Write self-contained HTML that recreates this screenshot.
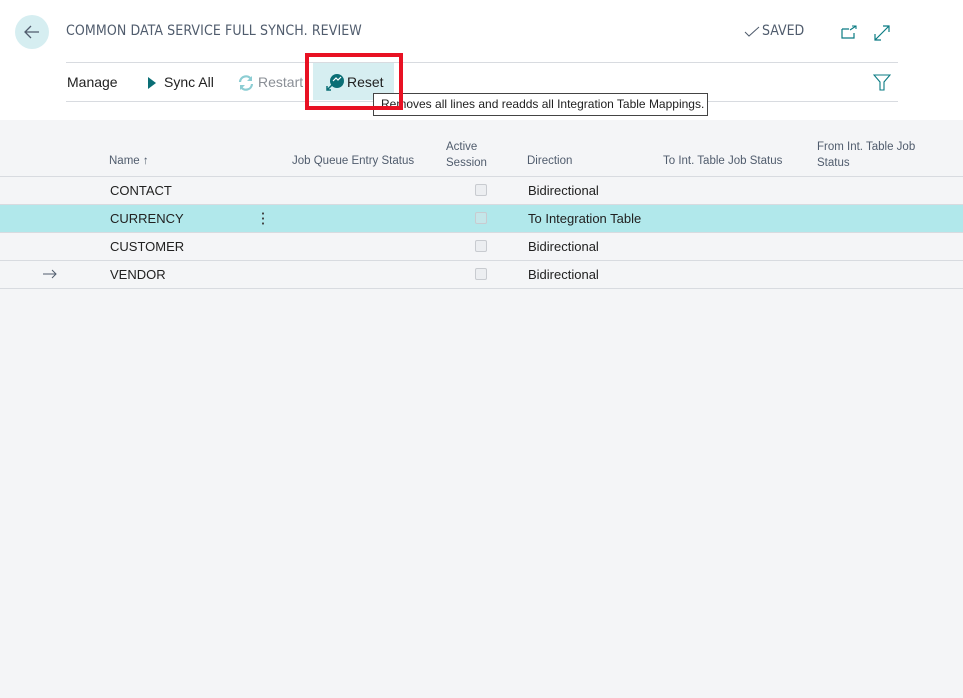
<!DOCTYPE html>
<html><head><meta charset="utf-8">
<style>
*{margin:0;padding:0;box-sizing:border-box}
body{width:963px;height:698px;background:#f4f5f7;font-family:"Segoe UI","Liberation Sans",sans-serif;position:relative;overflow:hidden;color:#212121}
.top{position:absolute;left:0;top:0;width:963px;height:120px;background:#fff}
.abs{position:absolute;white-space:nowrap}
.hdr{font-size:11.5px;color:#505c6d;line-height:16px}
.cell{font-size:13px;color:#212121}
.line{position:absolute;height:1px;background:#d8dbe0}
.cb{position:absolute;width:12px;height:12px;border:1px solid #c8cbd0;border-radius:2px;background:#eceef1}
</style></head><body>
<div class="top"></div>
<div class="abs" style="left:15px;top:15px;width:34px;height:34px;border-radius:50%;background:#d6eef1"></div>
<svg class="abs" style="left:22px;top:22px" width="20" height="20" viewBox="0 0 20 20"><path d="M17 10H3M9 4L3 10L9 16" fill="none" stroke="#505c6d" stroke-width="1.3"/></svg>
<div class="abs" style="left:66px;top:23px;font-size:14px;color:#505c6d;letter-spacing:0.1px;font-family:'DejaVu Sans Condensed','Liberation Sans Narrow','Liberation Sans',sans-serif">COMMON DATA SERVICE FULL SYNCH. REVIEW</div>
<svg class="abs" style="left:744px;top:26px" width="16" height="12"><path d="M1 6L5 10L15 1" fill="none" stroke="#505c6d" stroke-width="1"/></svg>
<div class="abs" style="left:762px;top:23px;font-size:14px;color:#505c6d;font-family:'DejaVu Sans Condensed','Liberation Sans Narrow','Liberation Sans',sans-serif">SAVED</div>
<svg class="abs" style="left:841px;top:25px" width="18" height="15"><path d="M1 4H8M1 4V13H13V8" fill="none" stroke="#0a7b83" stroke-width="1.2"/><path d="M9 5L15 1M11 1H15V4" fill="none" stroke="#0a7b83" stroke-width="1.1"/></svg>
<svg class="abs" style="left:873px;top:24px" width="18" height="18"><path d="M2 16L16 2M10 2H16V8M2 10V16H8" fill="none" stroke="#0a7b83" stroke-width="1.2"/></svg>
<div class="line" style="left:66px;top:62px;width:832px"></div>
<div class="line" style="left:66px;top:101px;width:832px"></div>
<div class="abs" style="left:67px;top:74px;font-size:14px;color:#212121">Manage</div>
<svg class="abs" style="left:147px;top:76px" width="10" height="14"><path d="M1 1L9 7L1 13Z" fill="#0a6e75"/></svg>
<div class="abs" style="left:164px;top:74px;font-size:14px">Sync All</div>
<svg class="abs" style="left:238px;top:75px" width="16" height="16" viewBox="0 0 16 16"><path d="M2 7A6 6 0 0 1 13 4M14 9A6 6 0 0 1 3 12" fill="none" stroke="#8ccdd3" stroke-width="2.2"/><path d="M14 1V6H9Z M2 15V10H7Z" fill="#8ccdd3"/></svg>
<div class="abs" style="left:258px;top:74px;font-size:14px;color:#8a8f96">Restart</div>
<div class="abs" style="left:313px;top:63px;width:81px;height:37px;background:#d6eef1"></div>
<svg class="abs" style="left:326px;top:73px" width="20" height="19" viewBox="0 0 20 19"><circle cx="11" cy="8" r="7" fill="#0a6e75"/><path d="M7 8L10 5L12 7L15 4" fill="none" stroke="#fff" stroke-width="1.2"/><path d="M1 17L6 12M1 13V17H5" fill="none" stroke="#0a6e75" stroke-width="1.5"/></svg>
<div class="abs" style="left:347px;top:74px;font-size:14px">Reset</div>
<div class="abs" style="left:373px;top:93px;width:335px;height:23px;background:#fff;border:1px solid #444;font-size:12px;line-height:21px;padding-left:7px;color:#212121">Removes all lines and readds all Integration Table Mappings.</div>
<div class="abs" style="left:305px;top:53px;width:98px;height:57px;border:4px solid #e81123"></div>
<svg class="abs" style="left:873px;top:74px" width="18" height="17"><path d="M1 1H17L11 8V16H7V8Z" fill="none" stroke="#0a7b83" stroke-width="1.1"/></svg>

<div class="abs hdr" style="left:109px;top:153px">Name ↑</div>
<div class="abs hdr" style="left:292px;top:153px">Job Queue Entry Status</div>
<div class="abs hdr" style="left:446px;top:139px">Active<br>Session</div>
<div class="abs hdr" style="left:527px;top:153px">Direction</div>
<div class="abs hdr" style="left:663px;top:153px">To Int. Table Job Status</div>
<div class="abs hdr" style="left:817px;top:139px">From Int. Table Job<br>Status</div>
<div class="line" style="left:0;top:176px;width:963px"></div>
<div class="abs" style="left:0;top:205px;width:963px;height:27px;background:#b1e8eb"></div>
<div class="line" style="left:0;top:204px;width:963px"></div>
<div class="line" style="left:0;top:232px;width:963px"></div>
<div class="line" style="left:0;top:260px;width:963px"></div>
<div class="line" style="left:0;top:288px;width:963px"></div>
<div class="abs cell" style="left:110px;top:183px">CONTACT</div>
<div class="abs cell" style="left:110px;top:211px">CURRENCY</div>
<div class="abs cell" style="left:110px;top:239px">CUSTOMER</div>
<div class="abs cell" style="left:110px;top:267px">VENDOR</div>
<div class="abs" style="left:262px;top:211px;width:2px;height:14px;background:radial-gradient(circle,#444 1px,transparent 1.2px) 0 0/2px 5px"></div>
<svg class="abs" style="left:43px;top:269px" width="14" height="10"><path d="M0 5H13M9 1L13 5L9 9" fill="none" stroke="#505c6d" stroke-width="1"/></svg>
<div class="cb" style="left:475px;top:184px"></div>
<div class="cb" style="left:475px;top:212px;background:#c4e6e9"></div>
<div class="cb" style="left:475px;top:240px"></div>
<div class="cb" style="left:475px;top:268px"></div>
<div class="abs cell" style="left:528px;top:183px">Bidirectional</div>
<div class="abs cell" style="left:528px;top:211px">To Integration Table</div>
<div class="abs cell" style="left:528px;top:239px">Bidirectional</div>
<div class="abs cell" style="left:528px;top:267px">Bidirectional</div>
</body></html>
